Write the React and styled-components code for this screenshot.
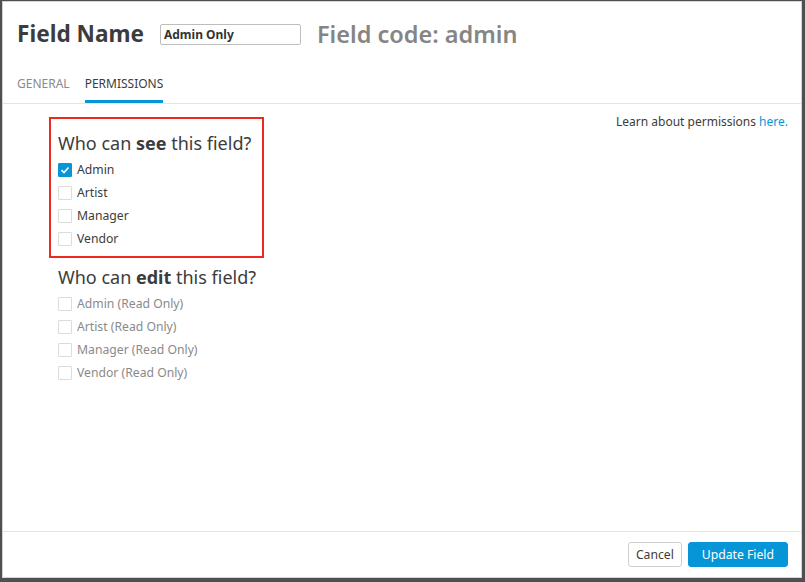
import React, { useState } from 'react';
import styled, { createGlobalStyle } from 'styled-components';

const GlobalStyle = createGlobalStyle`
  html, body {
    margin: 0;
    padding: 0;
    height: 100%;
  }
  body {
    background: #4f4f4f;
    font-family: "Noto Sans", "Open Sans", sans-serif;
  }
  #root {
    height: 100%;
  }
`;

const Backdrop = styled.div`
  height: 582px;
  box-sizing: border-box;
  padding: 1px 3px 4px 2px;
  display: flex;
`;

const Modal = styled.div`
  flex: 1;
  display: flex;
  flex-direction: column;
  background: #fff;
  border: 1px solid #d4d4d4;
`;

const Header = styled.div`
  display: flex;
  align-items: center;
  gap: 16px;
  padding: 17px 16px 0 14px;
`;

const Title = styled.h1`
  margin: 0;
  font-size: ${(p) => (p.$muted ? '23.5px' : '22.6px')};
  line-height: 30px;
  color: ${(p) => (p.$muted ? '#858585' : '#3c3c3c')};
  font-weight: ${(p) => (p.$muted ? 600 : 700)};
`;

const NameInput = styled.input`
  width: 141px;
  height: 21px;
  box-sizing: border-box;
  border: 1px solid #bdbdbd;
  border-radius: 2px;
  padding: 0 3px;
  font-family: inherit;
  font-size: 12px;
  font-weight: 700;
  color: #333;
  outline: none;
`;

const Tabs = styled.div`
  display: flex;
  gap: 15px;
  margin-top: 27px;
  padding-left: 14px;
  border-bottom: 1px solid #e3e3e3;
`;

const Tab = styled.button`
  background: none;
  border: none;
  padding: 0 0 8px;
  margin: 0;
  font-family: inherit;
  font-size: 12px;
  line-height: 16px;
  text-transform: uppercase;
  color: ${(p) => (p.$active ? '#3c3c3c' : '#8a8a8a')};
  border-bottom: 3px solid ${(p) => (p.$active ? '#0696d7' : 'transparent')};
  cursor: pointer;
`;

const Content = styled.div`
  flex: 1;
  display: flex;
  justify-content: space-between;
  padding: 13px 13px 0 46px;
`;

const Sections = styled.div`
  display: flex;
  flex-direction: column;
  gap: 5px;
`;

const Section = styled.div`
  width: 215px;
  box-sizing: border-box;
  border: 2px solid ${(p) => (p.$highlighted ? '#ee2a20' : 'transparent')};
  padding: ${(p) => (p.$highlighted ? '12px' : '0')} 8px 6px 7px;
`;

const Question = styled.h2`
  margin: 0 0 3px;
  font-size: 18px;
  line-height: 24px;
  font-weight: 400;
  color: #3c3c3c;
  white-space: nowrap;

  b {
    font-weight: 700;
  }
`;

const Row = styled.label`
  display: flex;
  align-items: center;
  gap: 5px;
  height: 23px;
  font-size: 12.2px;
  color: ${(p) => (p.$disabled ? '#8a8a8a' : '#3c3c3c')};
  cursor: ${(p) => (p.$disabled ? 'default' : 'pointer')};
  white-space: nowrap;
`;

const Box = styled.span`
  width: 14px;
  height: 14px;
  box-sizing: border-box;
  flex-shrink: 0;
  display: flex;
  align-items: center;
  justify-content: center;
  border: 1px solid ${(p) => (p.$checked ? '#0696d7' : '#dcdcdc')};
  background: ${(p) => (p.$checked ? '#0696d7' : '#fff')};
  border-radius: 1px;
`;

const Learn = styled.div`
  font-size: 12px;
  line-height: 18px;
  color: #3c3c3c;
  margin-top: -4px;

  a {
    color: #0696d7;
    text-decoration: none;
  }
`;

const Footer = styled.div`
  display: flex;
  justify-content: flex-end;
  gap: 6px;
  padding: 10px 13px 10px;
  border-top: 1px solid #e3e3e3;
`;

const Button = styled.button`
  height: 25px;
  box-sizing: border-box;
  padding: 0 ${(p) => (p.$primary ? '13px' : '7px')};
  border-radius: 3px;
  border: 1px solid ${(p) => (p.$primary ? '#0696d7' : '#cfcfcf')};
  background: ${(p) => (p.$primary ? '#0696d7' : '#fff')};
  color: ${(p) => (p.$primary ? '#fff' : '#3c3c3c')};
  font-family: inherit;
  font-size: 12.2px;
  cursor: pointer;
`;

const Check = () => (
  <svg width="10" height="10" viewBox="0 0 10 10">
    <path d="M1.5 5.2 L4 7.5 L8.5 2.5" fill="none" stroke="#fff" strokeWidth="1.6" />
  </svg>
);

const roles = ['Admin', 'Artist', 'Manager', 'Vendor'];

const App = () => {
  const [visible, setVisible] = useState({ Admin: true });
  const [tab, setTab] = useState('permissions');

  return (
    <>
      <GlobalStyle />
      <Backdrop>
        <Modal>
          <Header>
            <Title>Field Name</Title>
            <NameInput defaultValue="Admin Only" />
            <Title $muted>Field code: admin</Title>
          </Header>
          <Tabs>
            <Tab $active={tab === 'general'} onClick={() => setTab('general')}>General</Tab>
            <Tab $active={tab === 'permissions'} onClick={() => setTab('permissions')}>Permissions</Tab>
          </Tabs>
          <Content>
            <Sections>
              <Section $highlighted>
                <Question>Who can <b>see</b> this field?</Question>
                {roles.map((r) => (
                  <Row key={r} onClick={() => setVisible({ ...visible, [r]: !visible[r] })}>
                    <Box $checked={!!visible[r]}>{visible[r] && <Check />}</Box>
                    {r}
                  </Row>
                ))}
              </Section>
              <Section>
                <Question>Who can <b>edit</b> this field?</Question>
                {roles.map((r) => (
                  <Row key={r} $disabled>
                    <Box />
                    {r} (Read Only)
                  </Row>
                ))}
              </Section>
            </Sections>
            <Learn>
              Learn about permissions <a href="#">here.</a>
            </Learn>
          </Content>
          <Footer>
            <Button>Cancel</Button>
            <Button $primary>Update Field</Button>
          </Footer>
        </Modal>
      </Backdrop>
    </>
  );
};

export default App;
